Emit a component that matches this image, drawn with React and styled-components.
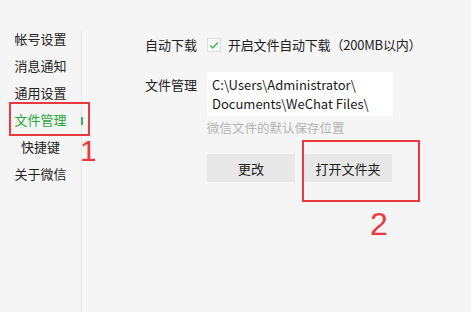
import React from "react";
import styled, { createGlobalStyle } from "styled-components";

const Global = createGlobalStyle`
  html, body { margin: 0; padding: 0; background: #ffffff; }
  body { font-family: "Noto Sans CJK SC", "Noto Sans", sans-serif; color: #222222; }
`;

const Window = styled.div`
  position: relative;
  width: 471px;
  height: 312px;
  background: #f5f5f5;
  display: flex;
  overflow: hidden;
`;

const Sidebar = styled.nav`
  width: 81px;
  padding-top: 25px;
  display: flex;
  flex-direction: column;
`;

const NavItem = styled.div`
  position: relative;
  height: 27px;
  line-height: 27px;
  text-align: center;
  font-size: 13px;
  color: ${(p) => (p.$active ? "#2aa43b" : "#222222")};
`;

const Indicator = styled.span`
  position: absolute;
  left: 81px;
  top: 11px;
  width: 2px;
  height: 8px;
  background: #3db24a;
`;

const Divider = styled.div`
  margin-top: 31px;
  width: 1px;
  background: #e2e2e2;
  border-right: 1px solid #fbfbfb;
`;

const Content = styled.main`
  flex: 1;
  padding: 35px 0 0 62px;
`;

const Form = styled.div`
  display: grid;
  grid-template-columns: 50px auto;
  column-gap: 12px;
  row-gap: 17px;
  align-items: start;
  font-size: 13px;
`;

const Label = styled.div`
  line-height: 20px;
  padding-top: ${(p) => p.$offset || 0}px;
  white-space: nowrap;
`;

const CheckRow = styled.label`
  display: flex;
  align-items: center;
  gap: 7px;
  line-height: 20px;
  white-space: nowrap;
  letter-spacing: -0.2px;
`;

const Box = styled.span`
  width: 12px;
  height: 12px;
  background: #ffffff;
  border: 1px solid #dcdcdc;
  display: flex;
  align-items: center;
  justify-content: center;
`;

const PathCol = styled.div`
  display: flex;
  flex-direction: column;
`;

const PathBox = styled.div`
  background: #ffffff;
  padding: 3px 5px;
  width: 176px;
  height: 38px;
  font-size: 13px;
  line-height: 19px;
  color: #1a1a1a;
`;

const Hint = styled.div`
  margin-top: 3px;
  font-size: 12.5px;
  line-height: 18px;
  color: #b4b4b4;
`;

const Buttons = styled.div`
  display: flex;
  gap: 9px;
  margin: 17px 0 0 62px;
`;

const Button = styled.button`
  width: 88px;
  height: 28px;
  border: none;
  background: #e8e8e8;
  font-family: inherit;
  font-size: 13px;
  color: #222222;
  padding: 0;
`;

const RedBox = styled.div`
  position: absolute;
  left: ${(p) => p.$x}px;
  top: ${(p) => p.$y}px;
  width: ${(p) => p.$w}px;
  height: ${(p) => p.$h}px;
  box-sizing: border-box;
  border: 2px solid #e83a3f;
  pointer-events: none;
`;

const Mark = styled.div`
  position: absolute;
  left: ${(p) => p.$x}px;
  top: ${(p) => p.$y}px;
  font-family: "Liberation Sans", Arial, sans-serif;
  font-size: ${(p) => p.$size}px;
  line-height: 1;
  color: #e83a3f;
`;

const items = ["帐号设置", "消息通知", "通用设置", "文件管理", "快捷键", "关于微信"];

export default function App() {
  return (
    <>
      <Global />
      <Window>
        <Sidebar>
          {items.map((t) => (
            <NavItem key={t} $active={t === "文件管理"}>
              {t}
              {t === "文件管理" && <Indicator />}
            </NavItem>
          ))}
        </Sidebar>
        <Divider />
        <Content>
          <Form>
            <Label>自动下载</Label>
            <CheckRow>
              <Box>
                <svg width="10" height="8" viewBox="0 0 10 8">
                  <path d="M1 4.2 L3.8 7 L9 1.2" fill="none" stroke="#3cb34a" strokeWidth="1.3" />
                </svg>
              </Box>
              开启文件自动下载（200MB以内）
            </CheckRow>
            <Label $offset={3}>文件管理</Label>
            <PathCol>
              <PathBox>
                C:\Users\Administrator\
                <br />
                Documents\WeChat Files\
              </PathBox>
              <Hint>微信文件的默认保存位置</Hint>
            </PathCol>
          </Form>
          <Buttons>
            <Button>更改</Button>
            <Button>打开文件夹</Button>
          </Buttons>
        </Content>
        <RedBox $x={9} $y={102} $w={81} $h={34} />
        <Mark $x={80} $y={136} $size={30}>1</Mark>
        <RedBox $x={302} $y={140} $w={118} $h={62} />
        <Mark $x={370} $y={208} $size={32}>2</Mark>
      </Window>
    </>
  );
}
